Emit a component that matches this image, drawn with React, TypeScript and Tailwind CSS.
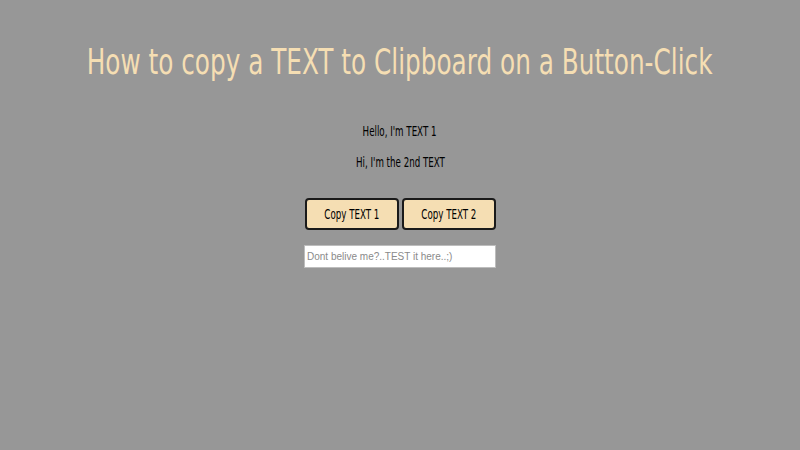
import React, { useState } from 'react';

const condensed = { fontFamily: '"DejaVu Sans Condensed", "DejaVu Sans", sans-serif', fontStretch: 'condensed' as const };

const App: React.FC = () => {
  const [value, setValue] = useState('');

  const copyText = (text: string) => {
    navigator.clipboard?.writeText(text).catch(() => {});
  };

  return (
    <div className="min-h-[450px] w-full bg-[#979797] flex flex-col items-center" style={condensed}>
      <h1 className="mt-[40px] text-[36px] leading-[44px] font-normal text-[#f5deb3] whitespace-nowrap scale-x-[0.764]">
        How to copy a TEXT to Clipboard on a Button-Click
      </h1>
      <p className="mt-[38px] text-[14px] leading-[18px] text-black whitespace-nowrap scale-x-[0.69]">Hello, I'm TEXT 1</p>
      <p className="mt-[13px] text-[14px] leading-[18px] text-black whitespace-nowrap scale-x-[0.69]">Hi, I'm the 2nd TEXT</p>
      <div className="mt-[27px] flex gap-[3px]">
        <button
          onClick={() => copyText("Hello, I'm TEXT 1")}
          className="w-[94px] h-[32px] bg-[#f5deb3] border-2 border-[#1a1a1a] rounded-[4px] text-[14px] text-black whitespace-nowrap"
        >
          <span className="inline-block scale-x-[0.69]">Copy TEXT 1</span>
        </button>
        <button
          onClick={() => copyText("Hi, I'm the 2nd TEXT")}
          className="w-[94px] h-[32px] bg-[#f5deb3] border-2 border-[#1a1a1a] rounded-[4px] text-[14px] text-black whitespace-nowrap"
        >
          <span className="inline-block scale-x-[0.69]">Copy TEXT 2</span>
        </button>
      </div>
      <input
        value={value}
        onChange={(e) => setValue(e.target.value)}
        placeholder="Dont belive me?..TEST it here..;)"
        className="mt-[15px] w-[192px] h-[23px] bg-white border border-[#bdbdbd] px-[2px] text-[10px] text-black placeholder:text-[#8a8a8a] outline-none"
        style={{ fontFamily: '"Liberation Sans", Arial, sans-serif' }}
      />
    </div>
  );
};

export default App;
